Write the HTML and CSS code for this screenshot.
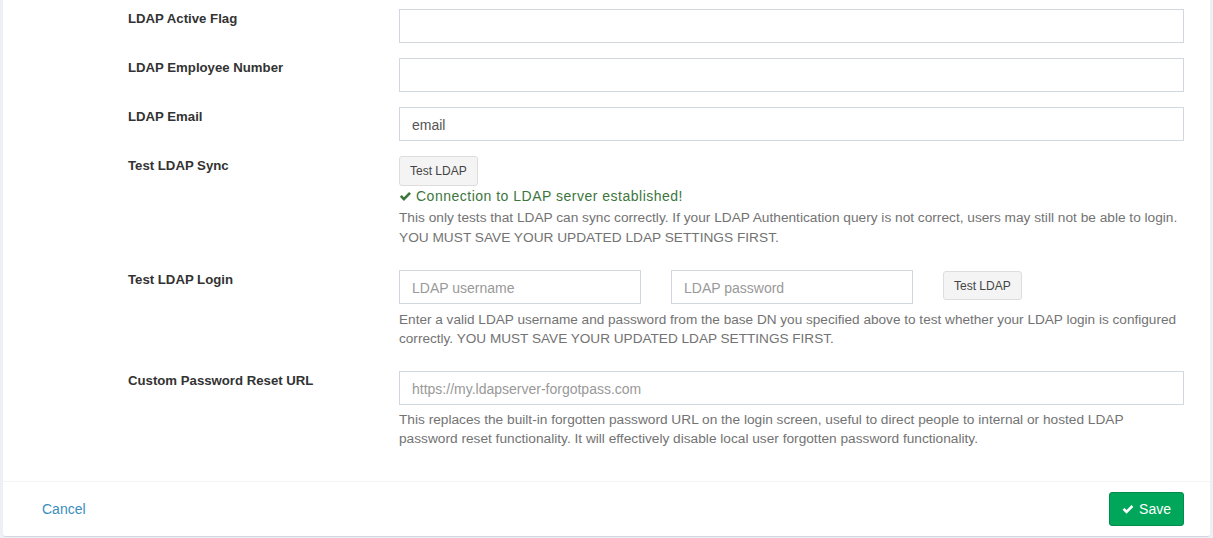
FILE: index.html
```html
<!DOCTYPE html>
<html>
<head>
<meta charset="utf-8">
<link rel="stylesheet" href="styles.css">
</head>
<body>
<div class="box">
  <div class="box-body">
    <div class="form-row">
      <label class="label">LDAP Active Flag</label>
      <div class="field"><input class="input" type="text"></div>
    </div>
    <div class="form-row">
      <label class="label">LDAP Employee Number</label>
      <div class="field"><input class="input" type="text"></div>
    </div>
    <div class="form-row">
      <label class="label">LDAP Email</label>
      <div class="field"><input class="input" type="text" value="email"></div>
    </div>
    <div class="form-row">
      <label class="label">Test LDAP Sync</label>
      <div class="field">
        <button class="btn btn-default" type="button">Test LDAP</button>
        <div class="success">
          <svg class="check" viewBox="0 0 16 14" width="13" height="11"><path d="M0.8 7.4 L3.2 5 L6 7.8 L12.6 1.2 L15 3.6 L6 12.6 Z" fill="currentColor"/></svg><span class="success-text">Connection to LDAP server established!</span>
        </div>
        <p class="help help-sync">This only tests that LDAP can sync correctly. If your LDAP Authentication query is not correct, users may still not be able to login.<br>YOU MUST SAVE YOUR UPDATED LDAP SETTINGS FIRST.</p>
      </div>
    </div>
    <div class="form-row">
      <label class="label">Test LDAP Login</label>
      <div class="field">
        <div class="login-line">
          <input class="input input-half" type="text" placeholder="LDAP username">
          <input class="input input-half" type="password" placeholder="LDAP password">
          <button class="btn btn-default btn-login" type="button">Test LDAP</button>
        </div>
        <p class="help help-login">Enter a valid LDAP username and password from the base DN you specified above to test whether your LDAP login is configured correctly. YOU MUST SAVE YOUR UPDATED LDAP SETTINGS FIRST.</p>
      </div>
    </div>
    <div class="form-row">
      <label class="label">Custom Password Reset URL</label>
      <div class="field">
        <input class="input" type="text" placeholder="https://my.ldapserver-forgotpass.com">
        <p class="help help-reset">This replaces the built-in forgotten password URL on the login screen, useful to direct people to internal or hosted LDAP password reset functionality. It will effectively disable local user forgotten password functionality.</p>
      </div>
    </div>
  </div>
  <div class="box-footer">
    <a class="cancel" href="#">Cancel</a>
    <button class="btn btn-success" type="button">
      <svg class="check" viewBox="0 0 16 14" width="13" height="11"><path d="M0.8 7.4 L3.2 5 L6 7.8 L12.6 1.2 L15 3.6 L6 12.6 Z" fill="currentColor"/></svg>
      Save
    </button>
  </div>
</div>
</body>
</html>
```
FILE: styles.css
```css
* { box-sizing: border-box; }
html, body { margin: 0; padding: 0; }
body {
  background: #ecf0f5;
  font-family: "Liberation Sans", Arial, sans-serif;
  font-size: 14px;
  line-height: 20px;
  color: #333;
}
.box {
  margin-left: 3px;
  width: 1207px;
  background: #fff;
  border-bottom: 1px solid #d2d6de;
  border-radius: 0 0 3px 3px;
}
.box-body {
  padding: 9px 26px 18px 125px;
}
.form-row {
  display: grid;
  grid-template-columns: 271px 1fr;
  margin-bottom: 15px;
}
.label {
  font-weight: bold;
  font-size: 13.2px;
  line-height: 18px;
  padding-top: 1px;
  color: #333;
}
.input {
  display: block;
  width: 100%;
  height: 34px;
  padding: 7px 12px 5px;
  border: 1px solid #d2d6de;
  border-radius: 0;
  font-family: inherit;
  font-size: 14px;
  color: #555;
  background: #fff;
  outline: none;
}
.input::placeholder { color: #999; }
.btn {
  font-family: inherit;
  border-radius: 3px;
  cursor: pointer;
}
.btn-default {
  display: block;
  height: 30px;
  padding: 0 10px;
  font-size: 12px;
  color: #444;
  background: #f4f4f4;
  border: 1px solid #ddd;
}
.success {
  color: #3c763d;
  font-size: 14px;
  line-height: 20px;
  display: flex;
  align-items: center;
  gap: 4px;
}
.success-text { letter-spacing: 0.5px; }
.help {
  margin: 0;
  color: #737373;
  font-size: 13.7px;
  line-height: 20px;
}
.help-sync { margin-top: 2px; margin-bottom: 7px; }
.login-line {
  display: flex;
  align-items: flex-start;
  gap: 30px;
}
.input-half { width: 242px; }
.btn-login { margin-top: 1px; height: 29px; }
.help-login { margin-top: 6px; line-height: 19px; font-size: 13.6px; margin-bottom: 8px; }
.help-reset { margin-top: 5px; line-height: 19px; }
.box-footer {
  border-top: 1px solid #f4f4f4;
  padding: 10px 26px 10px 39px;
  display: flex;
  align-items: center;
  justify-content: space-between;
}
.cancel {
  color: #3c8dbc;
  text-decoration: none;
  font-size: 14px;
}
.btn-success {
  height: 34px;
  padding: 0 12px;
  width: 75px;
  background: #00a65a;
  border: 1px solid #008d4c;
  color: #fff;
  font-size: 14px;
  display: flex;
  align-items: center;
  justify-content: center;
  gap: 5px;
}
```
